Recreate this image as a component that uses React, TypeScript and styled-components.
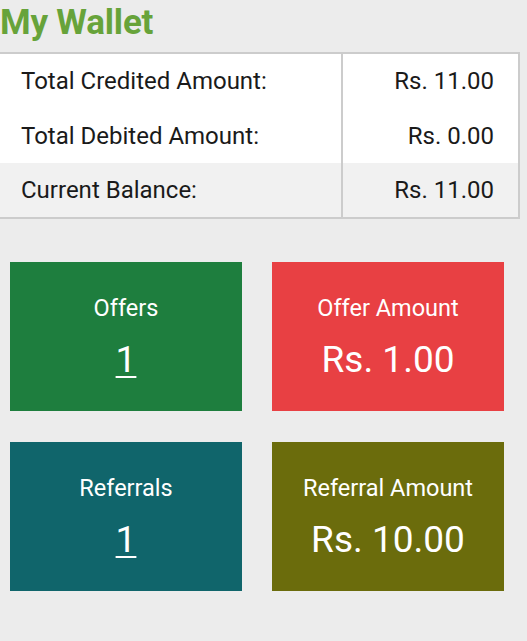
import React from "react";
import styled, { createGlobalStyle } from "styled-components";

const GlobalStyle = createGlobalStyle`
  html, body {
    margin: 0;
    padding: 0;
    background: #ececec;
    font-family: Roboto, "Noto Sans", sans-serif;
  }
`;

const rows = [
  { label: "Total Credited Amount:", value: "Rs. 11.00", shaded: false },
  { label: "Total Debited Amount:", value: "Rs. 0.00", shaded: false },
  { label: "Current Balance:", value: "Rs. 11.00", shaded: true },
];

const cards = [
  { title: "Offers", value: "1", link: true, color: "#1e7e3e" },
  { title: "Offer Amount", value: "Rs. 1.00", link: false, color: "#e84043" },
  { title: "Referrals", value: "1", link: true, color: "#10656b" },
  { title: "Referral Amount", value: "Rs. 10.00", link: false, color: "#6b6c0c" },
];

const App = () => {
  return (
    <Page>
      <GlobalStyle />
      <Title>My Wallet</Title>
      <Table>
        <tbody>
          {rows.map((r) => (
            <Row key={r.label} $shaded={r.shaded}>
              <Label>{r.label}</Label>
              <Value>{r.value}</Value>
            </Row>
          ))}
        </tbody>
      </Table>
      <Cards>
        {cards.map((c) => (
          <Card key={c.title} $color={c.color}>
            <CardTitle>{c.title}</CardTitle>
            <CardValue $link={c.link}>{c.value}</CardValue>
          </Card>
        ))}
      </Cards>
    </Page>
  );
};

const Page = styled.div`
  width: 527px;
  min-height: 641px;
  background: #ececec;
`;

const Title = styled.h1`
  margin: 0;
  height: 52px;
  padding-top: 1px;
  box-sizing: border-box;
  font-size: 35px;
  font-weight: 700;
  line-height: 44px;
  color: #67a33a;
  letter-spacing: -0.2px;
`;

const Table = styled.table`
  width: 520px;
  border-collapse: collapse;
  border: 2px solid #cccccc;
  border-left: none;
  font-size: 24px;
  color: #1a1a1a;
`;

const Row = styled.tr<{ $shaded: boolean }>`
  height: 55px;
  background: ${(p) => (p.$shaded ? "#f1f1f1" : "#ffffff")};
`;

const Label = styled.td`
  padding: 0 0 0 21px;
  width: 320px;
  border-right: 2px solid #cccccc;
`;

const Value = styled.td`
  padding: 0 24px 0 0;
  text-align: right;
`;

const Cards = styled.div`
  display: grid;
  grid-template-columns: 232px 232px;
  column-gap: 30px;
  row-gap: 31px;
  padding: 43px 0 0 10px;
`;

const Card = styled.div<{ $color: string }>`
  height: 149px;
  background: ${(p) => p.$color};
  color: #ffffff;
  display: flex;
  flex-direction: column;
  align-items: center;
  padding-top: 32px;
  box-sizing: border-box;
`;

const CardTitle = styled.div`
  font-size: 23.5px;
  line-height: 28px;
`;

const CardValue = styled.div<{ $link: boolean }>`
  margin-top: 16px;
  font-size: 37px;
  line-height: 44px;
  text-decoration: ${(p) => (p.$link ? "underline" : "none")};
  text-decoration-thickness: 2px;
  text-underline-offset: 4px;
`;

export default App;
